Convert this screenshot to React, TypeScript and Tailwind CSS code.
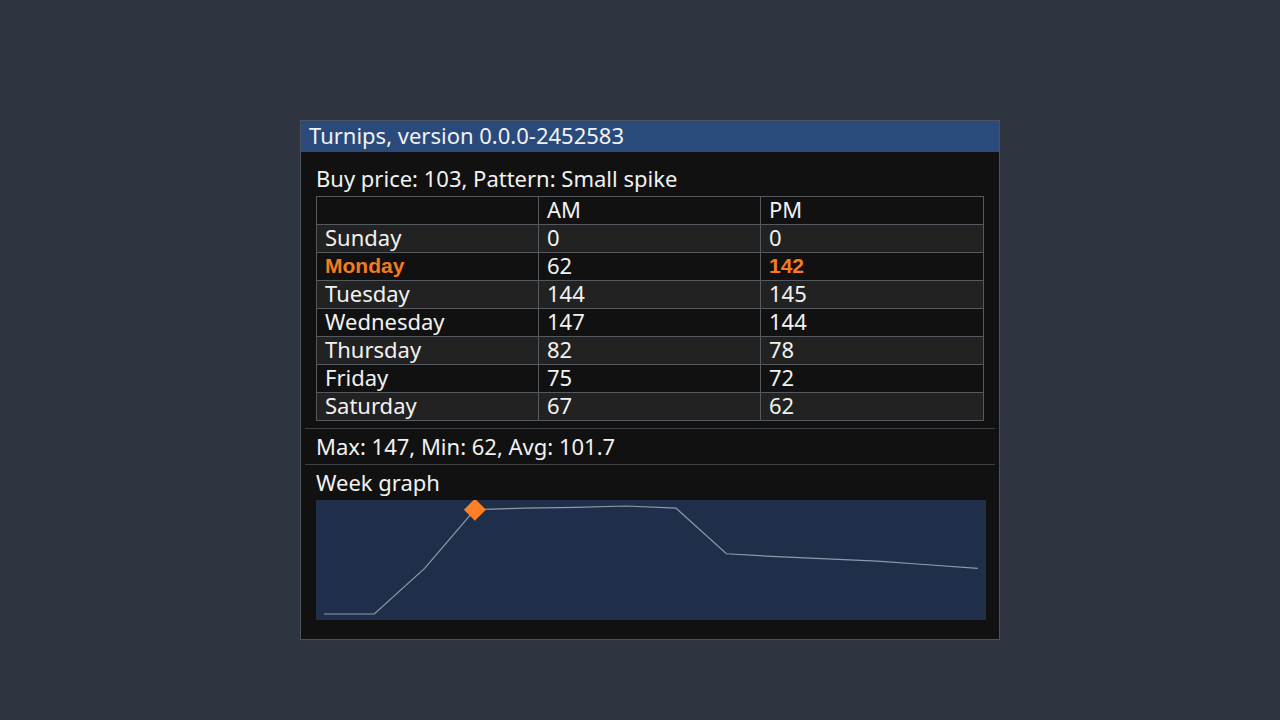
import React from "react";

const rows = [
  { day: "Sunday", am: 0, pm: 0 },
  { day: "Monday", am: 62, pm: 142, hot: true },
  { day: "Tuesday", am: 144, pm: 145 },
  { day: "Wednesday", am: 147, pm: 144 },
  { day: "Thursday", am: 82, pm: 78 },
  { day: "Friday", am: 75, pm: 72 },
  { day: "Saturday", am: 67, pm: 62 },
];

// graph is 670x120, 0 sits at y=114 and 147 at y=6
const values = rows.flatMap((r) => [r.am, r.pm]);
const pts = values.map((v, i) => [8 + i * 50.3, 114 - (v * 108) / 147]);

function WeekGraph() {
  const [mx, my] = pts[3];
  return (
    <svg width="670" height="120" viewBox="0 0 670 120" className="block">
      <polyline
        points={pts.map((p) => p.join(",")).join(" ")}
        fill="none"
        stroke="#8e9aab"
        strokeWidth="1.2"
      />
      <polygon
        points={`${mx},${my - 11} ${mx + 11},${my} ${mx},${my + 11} ${mx - 11},${my}`}
        fill="#ff7f27"
      />
    </svg>
  );
}

const cell = "border border-[#555a60] px-[8px] pt-0 pb-[2px] leading-[25px]";
const hotCell = "text-[#f47b20] font-bold text-[21px]";
const arial = { fontFamily: '"Liberation Sans", Arial, sans-serif' };

export default function App() {
  return (
    <div
      className="min-h-screen w-full bg-[#2e3440] pl-[300px] pt-[120px] text-[#f2f2f2]"
      style={{ fontFamily: '"Noto Sans", sans-serif' }}
    >
      <div className="w-[700px] h-[520px] border border-[#4c525e] bg-[#111111] flex flex-col">
        {/* title bar */}
        <div className="h-[31px] bg-[#294a7b] pl-[8px] text-[22px] leading-[29px]">
          Turnips, version 0.0.0-2452583
        </div>

        <div className="px-[15px] pt-[11px]">
          <div className="text-[22px] leading-[30px] mb-[3px]">Buy price: 103, Pattern: Small spike</div>
          <table className="w-[668px] border-collapse border border-[#555a60] text-[22px] table-fixed">
            <tbody>
              <tr className="h-[28px] bg-[#111111]">
                <td className={`w-[222px] ${cell}`}></td>
                <td className={`w-[222px] ${cell}`}>AM</td>
                <td className={cell}>PM</td>
              </tr>
              {rows.map((r, i) => (
                <tr key={r.day} className={`h-[28px] ${i % 2 === 0 ? "bg-[#222222]" : "bg-[#111111]"}`}>
                  <td className={`${cell} ${r.hot ? hotCell : ""}`} style={r.hot ? arial : undefined}>
                    {r.day}
                  </td>
                  <td className={cell}>{r.am}</td>
                  <td className={`${cell} ${r.hot ? hotCell : ""}`} style={r.hot ? arial : undefined}>
                    {r.pm}
                  </td>
                </tr>
              ))}
            </tbody>
          </table>
        </div>

        <div className="mx-[4px] mt-[7px] border-t border-[#3c3f44]" />
        <div className="px-[15px] h-[35px] text-[22px] leading-[34px]">Max: 147, Min: 62, Avg: 101.7</div>
        <div className="mx-[4px] border-t border-[#3c3f44]" />
        <div className="px-[15px] h-[35px] text-[22px] leading-[34px]">Week graph</div>
        <div className="px-[15px]">
          <div className="w-[670px] h-[120px] bg-[#1f2f4a]">
            <WeekGraph />
          </div>
        </div>
      </div>
    </div>
  );
}
